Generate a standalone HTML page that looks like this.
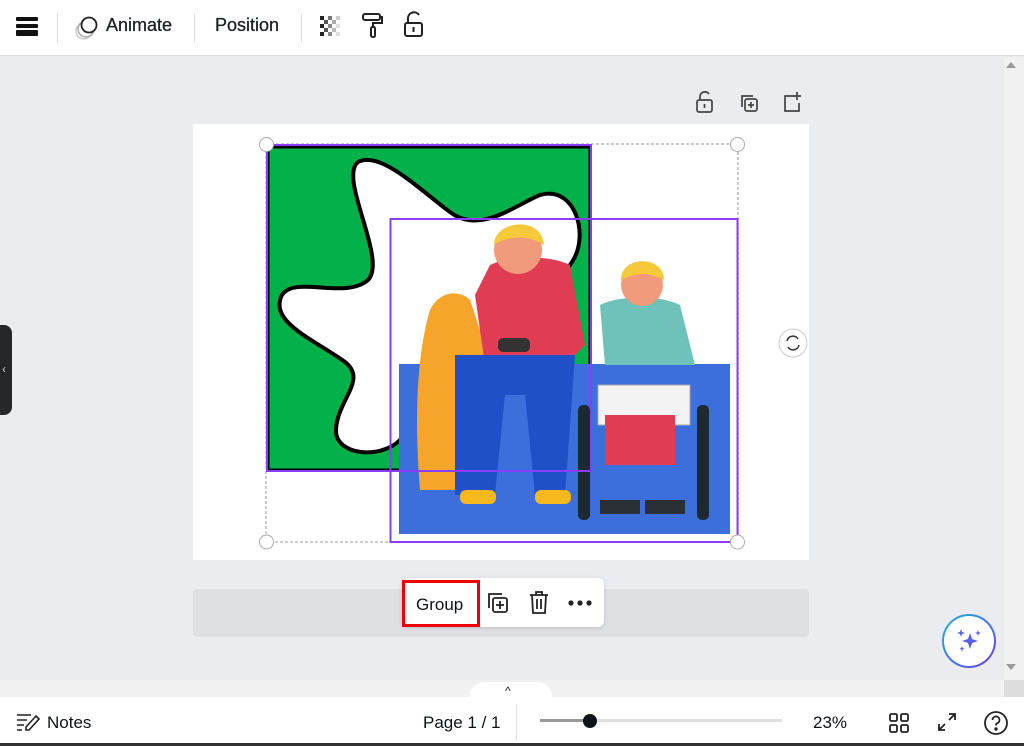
<!DOCTYPE html>
<html><head><meta charset="utf-8"><style>
*{margin:0;padding:0;box-sizing:border-box}
body{width:1024px;height:746px;overflow:hidden;background:#ebecf0;font-family:"Liberation Sans",sans-serif;position:relative;color:#0e1318}
.abs{position:absolute}
.top{left:0;top:0;width:1024px;height:56px;background:#fff;border-bottom:1px solid #dcdde1}
.sep{width:1px;height:28px;background:#dcdde1;top:14px}
.t{font-size:18px;top:15px;color:#1c1f23;-webkit-text-stroke:0.3px #1c1f23}
</style></head><body>
<div class="abs top"></div>
<div class="abs" style="left:16px;top:17px;width:22px;height:4px;background:#111;border-radius:1px"></div>
<div class="abs" style="left:16px;top:24px;width:22px;height:4px;background:#111;border-radius:1px"></div>
<div class="abs" style="left:16px;top:30px;width:22px;height:6px;background:#111;border-radius:1px"></div>
<div class="abs sep" style="left:57px"></div>
<svg class="abs" style="left:74px;top:13px" width="28" height="28" viewBox="0 0 28 28"><circle cx="10" cy="18" r="8" fill="none" stroke="#ccc" stroke-width="1.5"/><circle cx="12" cy="16" r="8" fill="none" stroke="#aaa" stroke-width="1.5"/><circle cx="15" cy="12" r="7.5" fill="#fff" stroke="#222" stroke-width="1.8"/></svg>
<div class="abs t" style="left:106px">Animate</div>
<div class="abs sep" style="left:194px"></div>
<div class="abs t" style="left:215px">Position</div>
<div class="abs sep" style="left:301px"></div>
<svg class="abs" style="left:318px;top:14px" width="26" height="26" viewBox="0 0 26 26"><g fill="#222"><rect x="2" y="2" width="4" height="4"/><rect x="10" y="2" width="4" height="4" fill="#777"/><rect x="6" y="6" width="4" height="4" fill="#555"/><rect x="2" y="10" width="4" height="4"/><rect x="10" y="10" width="4" height="4" fill="#888"/><rect x="14" y="6" width="4" height="4" fill="#aaa"/><rect x="18" y="2" width="4" height="4" fill="#ccc"/><rect x="6" y="14" width="4" height="4" fill="#555"/><rect x="2" y="18" width="4" height="4"/><rect x="10" y="18" width="4" height="4" fill="#888"/><rect x="14" y="14" width="4" height="4" fill="#bbb"/><rect x="18" y="10" width="4" height="4" fill="#ddd"/><rect x="18" y="18" width="4" height="4" fill="#ddd"/></g></svg>
<svg class="abs" style="left:360px;top:12px" width="26" height="28" viewBox="0 0 26 28" fill="none" stroke="#222" stroke-width="2"><rect x="3" y="2" width="17" height="6" rx="2"/><path d="M20 5h2v6h-9v4"/><rect x="11" y="15" width="4" height="10" rx="1.5"/></svg>
<svg class="abs" style="left:402px;top:11px" width="24" height="28" viewBox="0 0 24 28" fill="none" stroke="#222" stroke-width="2"><path d="M6 12V7a6 6 0 0 1 11-3"/><rect x="3" y="12" width="17" height="13" rx="2"/><path d="M11.5 16v5" /></svg>
<div class="abs" style="left:1004px;top:57px;width:20px;height:623px;background:#f1f1f1"></div>
<div class="abs" style="left:1006px;top:62px;width:0;height:0;border:5px solid transparent;border-bottom:6px solid #999;border-top:0"></div>
<div class="abs" style="left:1006px;top:664px;width:0;height:0;border:5px solid transparent;border-top:6px solid #999;border-bottom:0"></div>
<div class="abs" style="left:-10px;top:325px;width:22px;height:90px;background:#25272b;border-radius:8px"></div>
<div class="abs" style="left:2px;top:362px;color:#ccc;font-size:12px">‹</div>
<svg class="abs" style="left:694px;top:90px" width="22" height="24" viewBox="0 0 22 24" fill="none" stroke="#444" stroke-width="1.7"><path d="M6 10V6a5 5 0 0 1 9-2"/><rect x="3" y="10" width="15" height="12" rx="2"/><path d="M10.5 14v4"/></svg>
<svg class="abs" style="left:738px;top:92px" width="22" height="22" viewBox="0 0 22 22" fill="none" stroke="#444" stroke-width="1.7"><path d="M4 15V4h11"/><rect x="7" y="7" width="12" height="12" rx="2"/><path d="M13 10v6M10 13h6"/></svg>
<svg class="abs" style="left:782px;top:90px" width="22" height="24" viewBox="0 0 22 24" fill="none" stroke="#444" stroke-width="1.7"><path d="M12 6H3v15h14v-8"/><path d="M15 2v8M11 6h8"/></svg>
<div class="abs" style="left:193px;top:124px;width:616px;height:436px;background:#fff"></div>
<svg class="abs" style="left:0;top:0" width="1024" height="746">
<rect x="266" y="144" width="472" height="398" fill="none" stroke="#ccc" stroke-width="2" stroke-dasharray="3 2"/>
<rect x="268" y="147" width="322" height="323" fill="#03b14a" stroke="#000" stroke-width="3"/>
<path d="M358 162 C380 150 420 190 450 212 C480 235 515 205 540 195 C575 185 590 235 572 262 L560 280 L440 360 L400 440 C380 460 335 455 336 430 C337 400 368 380 345 362 C315 340 268 322 282 295 C295 275 345 300 368 280 C388 260 338 178 358 162z" fill="#fff" stroke="#000" stroke-width="4"/>
<rect x="399" y="364" width="331" height="170" fill="#3c6fdc"/>
<path d="M430 310c10-20 30-20 40-10l20 60v130h-70c-5-60-5-130 10-180z" fill="#f4a52a"/>
<path d="M490 265c20-10 60-10 80 0l15 80-20 20h-80l-10-70z" fill="#e03c53"/>
<circle cx="518" cy="250" r="24" fill="#f19a7c"/><path d="M494 245c0-25 48-30 50 0-15-10-35-10-50 0z" fill="#f6c93a"/>
<path d="M455 355h120l-10 140h-30l-10-100h-20l-10 100h-40z" fill="#2050c8"/>
<rect x="498" y="338" width="32" height="14" rx="5" fill="#333"/>
<rect x="460" y="490" width="36" height="14" rx="6" fill="#f6b81c"/><rect x="535" y="490" width="36" height="14" rx="6" fill="#f6b81c"/>
<path d="M600 305c20-10 60-10 80 0l15 60h-90z" fill="#6fc2b9"/>
<circle cx="642" cy="285" r="21" fill="#f19a7c"/><path d="M621 280c0-25 43-25 43 0-15-8-28-8-43 0z" fill="#f6c93a"/>
<rect x="598" y="385" width="92" height="40" fill="#f3f3f3" stroke="#aaa"/>
<rect x="605" y="415" width="70" height="50" fill="#e03c53"/>
<rect x="578" y="405" width="12" height="115" rx="5" fill="#1e2a33"/><rect x="697" y="405" width="12" height="115" rx="5" fill="#1e2a33"/>
<rect x="600" y="500" width="40" height="14" fill="#2a3036"/><rect x="645" y="500" width="40" height="14" fill="#2a3036"/>
<rect x="267" y="145" width="324" height="326" fill="none" stroke="#8b3dff" stroke-width="2"/>
<rect x="390.5" y="219" width="347" height="323" fill="none" stroke="#8b3dff" stroke-width="2"/>
<g fill="#fff" stroke="#aaa" stroke-width="1"><circle cx="266.5" cy="144.5" r="7"/><circle cx="737.5" cy="144.5" r="7"/><circle cx="266.5" cy="542" r="7"/><circle cx="737.5" cy="542" r="7"/></g>
<circle cx="793" cy="343" r="14" fill="#fff" stroke="#ccc"/>
<path d="M787 341a6 6 0 0 1 11-2M799 345a6 6 0 0 1-11 2" fill="none" stroke="#333" stroke-width="1.5"/>
<path d="M232 605H380" stroke="#e11" stroke-width="3"/><path d="M378 597l17 8-17 8z" fill="#e11"/>
</svg>
<div class="abs" style="left:193px;top:589px;width:616px;height:48px;background:#dfe0e4;border-radius:4px"></div>
<div class="abs" style="left:402px;top:578px;width:202px;height:49px;background:#fff;border-radius:6px;box-shadow:0 1px 4px rgba(0,0,0,.15)"></div>
<div class="abs" style="left:402px;top:580px;width:78px;height:47px;border:3px solid #e00;font-size:17px;padding:12px 0 0 11px">Group</div>
<svg class="abs" style="left:486px;top:591px" width="24" height="24" viewBox="0 0 24 24" fill="none" stroke="#222" stroke-width="1.8"><path d="M3 17V3h13"/><rect x="7" y="7" width="14" height="14" rx="2"/><path d="M14 10v8M10 14h8"/></svg>
<svg class="abs" style="left:527px;top:590px" width="24" height="26" viewBox="0 0 24 26" fill="none" stroke="#222" stroke-width="1.8"><path d="M3 5h18M9 5V2h6v3"/><path d="M5 5l1 18h12l1-18"/><path d="M10 9v10M14 9v10"/></svg>
<svg class="abs" style="left:567px;top:598px" width="26" height="10" viewBox="0 0 26 10" fill="#222"><circle cx="4" cy="5" r="2.6"/><circle cx="13" cy="5" r="2.6"/><circle cx="22" cy="5" r="2.6"/></svg>
<div class="abs" style="left:942px;top:614px;width:54px;height:54px;border-radius:50%;background:linear-gradient(135deg,#1fb6d4,#6a3cf0);padding:2px"><div style="width:100%;height:100%;border-radius:50%;background:#fff"></div></div>
<svg class="abs" style="left:955px;top:627px" width="28" height="28" viewBox="0 0 28 28" fill="#5a5ee8"><path d="M15 6l2 6 6 2-6 2-2 6-2-6-6-2 6-2z"/><path d="M6 2l1 3 3 1-3 1-1 3-1-3-3-1 3-1z"/><path d="M23 3l.8 2.2 2.2.8-2.2.8L23 9l-.8-2.2L20 6l2.2-.8z"/><path d="M7 19l.7 2 2 .7-2 .7L7 25l-.7-2.6-2-.7 2-.7z"/></svg>
<div class="abs" style="left:0;top:680px;width:1024px;height:17px;background:#f1f1f1"></div>
<div class="abs" style="left:1004px;top:680px;width:20px;height:17px;background:#ddd"></div>
<div class="abs" style="left:470px;top:682px;width:82px;height:16px;background:#fff;border-radius:14px 14px 0 0"></div>
<div class="abs" style="left:505px;top:684px;font-size:12px">^</div>
<div class="abs" style="left:0;top:697px;width:1024px;height:49px;background:#fff;border-bottom:3px solid #333"></div>
<svg class="abs" style="left:16px;top:712px" width="24" height="20" viewBox="0 0 24 20" fill="none" stroke="#222" stroke-width="1.6"><path d="M1 3h14M1 8h10M1 13h7M1 18h5"/><path d="M20 4l3 3-10 11H10v-3z"/></svg>
<div class="abs" style="left:47px;top:713px;font-size:17px">Notes</div>
<div class="abs" style="left:423px;top:713px;font-size:17px">Page 1 / 1</div>
<div class="abs" style="left:516px;top:704px;width:1px;height:36px;background:#e2e3e6"></div>
<div class="abs" style="left:540px;top:719px;width:242px;height:3px;background:#dfe0e4"></div>
<div class="abs" style="left:540px;top:719px;width:50px;height:3px;background:#999"></div>
<div class="abs" style="left:583px;top:714px;width:14px;height:14px;border-radius:50%;background:#0e1318"></div>
<div class="abs" style="left:813px;top:713px;font-size:17px">23%</div>
<svg class="abs" style="left:888px;top:712px" width="22" height="22" viewBox="0 0 22 22" fill="none" stroke="#222" stroke-width="1.8"><rect x="2" y="2" width="7" height="7" rx="1.5"/><rect x="13" y="2" width="7" height="7" rx="1.5"/><rect x="2" y="13" width="7" height="7" rx="1.5"/><rect x="13" y="13" width="7" height="7" rx="1.5"/></svg>
<svg class="abs" style="left:936px;top:711px" width="22" height="22" viewBox="0 0 22 22" fill="none" stroke="#222" stroke-width="1.8"><path d="M13 3h6v6M19 3l-6 6M9 19H3v-6M3 19l6-6"/></svg>
<svg class="abs" style="left:983px;top:710px" width="26" height="26" viewBox="0 0 26 26" fill="none" stroke="#222" stroke-width="1.8"><circle cx="13" cy="13" r="11"/><path d="M9.5 10a3.5 3.5 0 1 1 4.5 3.3c-1 .4-1 1-1 2.2"/><circle cx="13" cy="19" r=".8" fill="#222"/></svg>
</body></html>
